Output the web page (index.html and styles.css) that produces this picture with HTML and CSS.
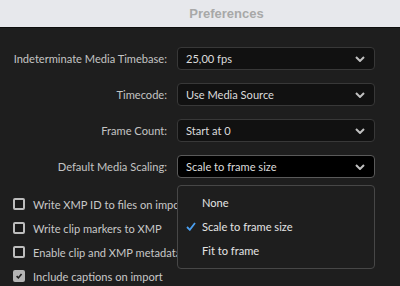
FILE: index.html
```html
<!DOCTYPE html>
<html>
<head>
<meta charset="utf-8">
<link rel="stylesheet" href="styles.css">
</head>
<body>
<div class="titlebar">Preferences</div>
<div class="content">
  <div class="form">
    <label class="label">Indeterminate Media Timebase:</label>
    <div class="select"><span>25,00 fps</span><svg class="chev" viewBox="0 0 10 6"><path d="M1 1 L5 5 L9 1"/></svg></div>
    <label class="label">Timecode:</label>
    <div class="select"><span>Use Media Source</span><svg class="chev" viewBox="0 0 10 6"><path d="M1 1 L5 5 L9 1"/></svg></div>
    <label class="label">Frame Count:</label>
    <div class="select"><span>Start at 0</span><svg class="chev" viewBox="0 0 10 6"><path d="M1 1 L5 5 L9 1"/></svg></div>
    <label class="label">Default Media Scaling:</label>
    <div class="select-wrap">
      <div class="select active"><span>Scale to frame size</span><svg class="chev" viewBox="0 0 10 6"><path d="M1 1 L5 5 L9 1"/></svg></div>
      <ul class="menu">
        <li class="item">None</li>
        <li class="item checked"><svg class="tick" viewBox="0 0 10 9"><path d="M1 5 L3.8 7.8 L9 1"/></svg>Scale to frame size</li>
        <li class="item">Fit to frame</li>
      </ul>
    </div>
  </div>
  <div class="checks">
    <div class="check"><span class="box"></span><span class="ctext">Write XMP ID to files on import</span></div>
    <div class="check"><span class="box"></span><span class="ctext">Write clip markers to XMP</span></div>
    <div class="check"><span class="box"></span><span class="ctext">Enable clip and XMP metadata linking</span></div>
    <div class="check"><span class="box on"><svg viewBox="0 0 10 10"><path d="M2 5.2 L4.2 7.4 L8.2 2.4"/></svg></span><span class="ctext">Include captions on import</span></div>
  </div>
</div>
</body>
</html>
```

FILE: styles.css
```css
* { box-sizing: border-box; }
html, body {
  margin: 0;
  padding: 0;
  width: 400px;
  height: 286px;
  overflow: hidden;
  background: #1e1e1e;
  font-family: Lato, "Noto Sans", sans-serif;
}
.titlebar {
  height: 28px;
  background: #e7e8ec;
  border-bottom: 1px solid #0e0e0e;
  color: #a8a8a8;
  font-weight: 700;
  font-size: 13px;
  line-height: 27px;
  text-align: center;
  padding-left: 53px;
  font-family: "Liberation Sans", "Noto Sans", sans-serif;
}
.content {
  padding-top: 19px;
}
.form {
  display: grid;
  grid-template-columns: 167px 198px;
  column-gap: 10px;
  row-gap: 13px;
  align-items: center;
}
.label {
  text-align: right;
  color: #c4c4c4;
  font-size: 11.1px;
}
.select {
  height: 23px;
  border: 1px solid #383838;
  border-radius: 4px;
  background: #111111;
  display: flex;
  align-items: center;
  justify-content: space-between;
  padding: 0 9px 0 8px;
  color: #dcdcdc;
  font-size: 11.1px;
}
.select.active {
  background: #000;
  border-color: #5a5a5a;
}
.chev {
  width: 10px;
  height: 6px;
  fill: none;
  stroke: #c0c0c0;
  stroke-width: 2;
}
.select-wrap {
  position: relative;
}
.menu {
  position: absolute;
  left: 0;
  top: 30px;
  width: 198px;
  margin: 0;
  padding: 5px 0;
  list-style: none;
  background: #1e1e1e;
  border: 1px solid #474747;
  border-radius: 4px;
  z-index: 2;
}
.item {
  height: 24px;
  line-height: 24px;
  padding-left: 24px;
  color: #e4e4e4;
  font-size: 11.1px;
  position: relative;
}
.tick {
  position: absolute;
  left: 8px;
  top: 7px;
  width: 10px;
  height: 9px;
  fill: none;
  stroke: #4a9ff0;
  stroke-width: 1.8;
}
.checks {
  margin-top: 14px;
  padding-left: 13px;
}
.check {
  height: 24px;
  display: flex;
  align-items: center;
  gap: 8px;
  white-space: nowrap;
}
.box {
  width: 12px;
  height: 12px;
  border: 2px solid #bdbdbd;
  border-radius: 2px;
  background: #1a1a1a;
  flex: none;
  display: flex;
}
.box.on {
  background: #b4b4b4;
  border-color: #b4b4b4;
}
.box svg {
  width: 8px;
  height: 8px;
  fill: none;
  stroke: #1e1e1e;
  stroke-width: 2;
}
.ctext {
  color: #c8c8c8;
  font-size: 11.1px;
}
```
